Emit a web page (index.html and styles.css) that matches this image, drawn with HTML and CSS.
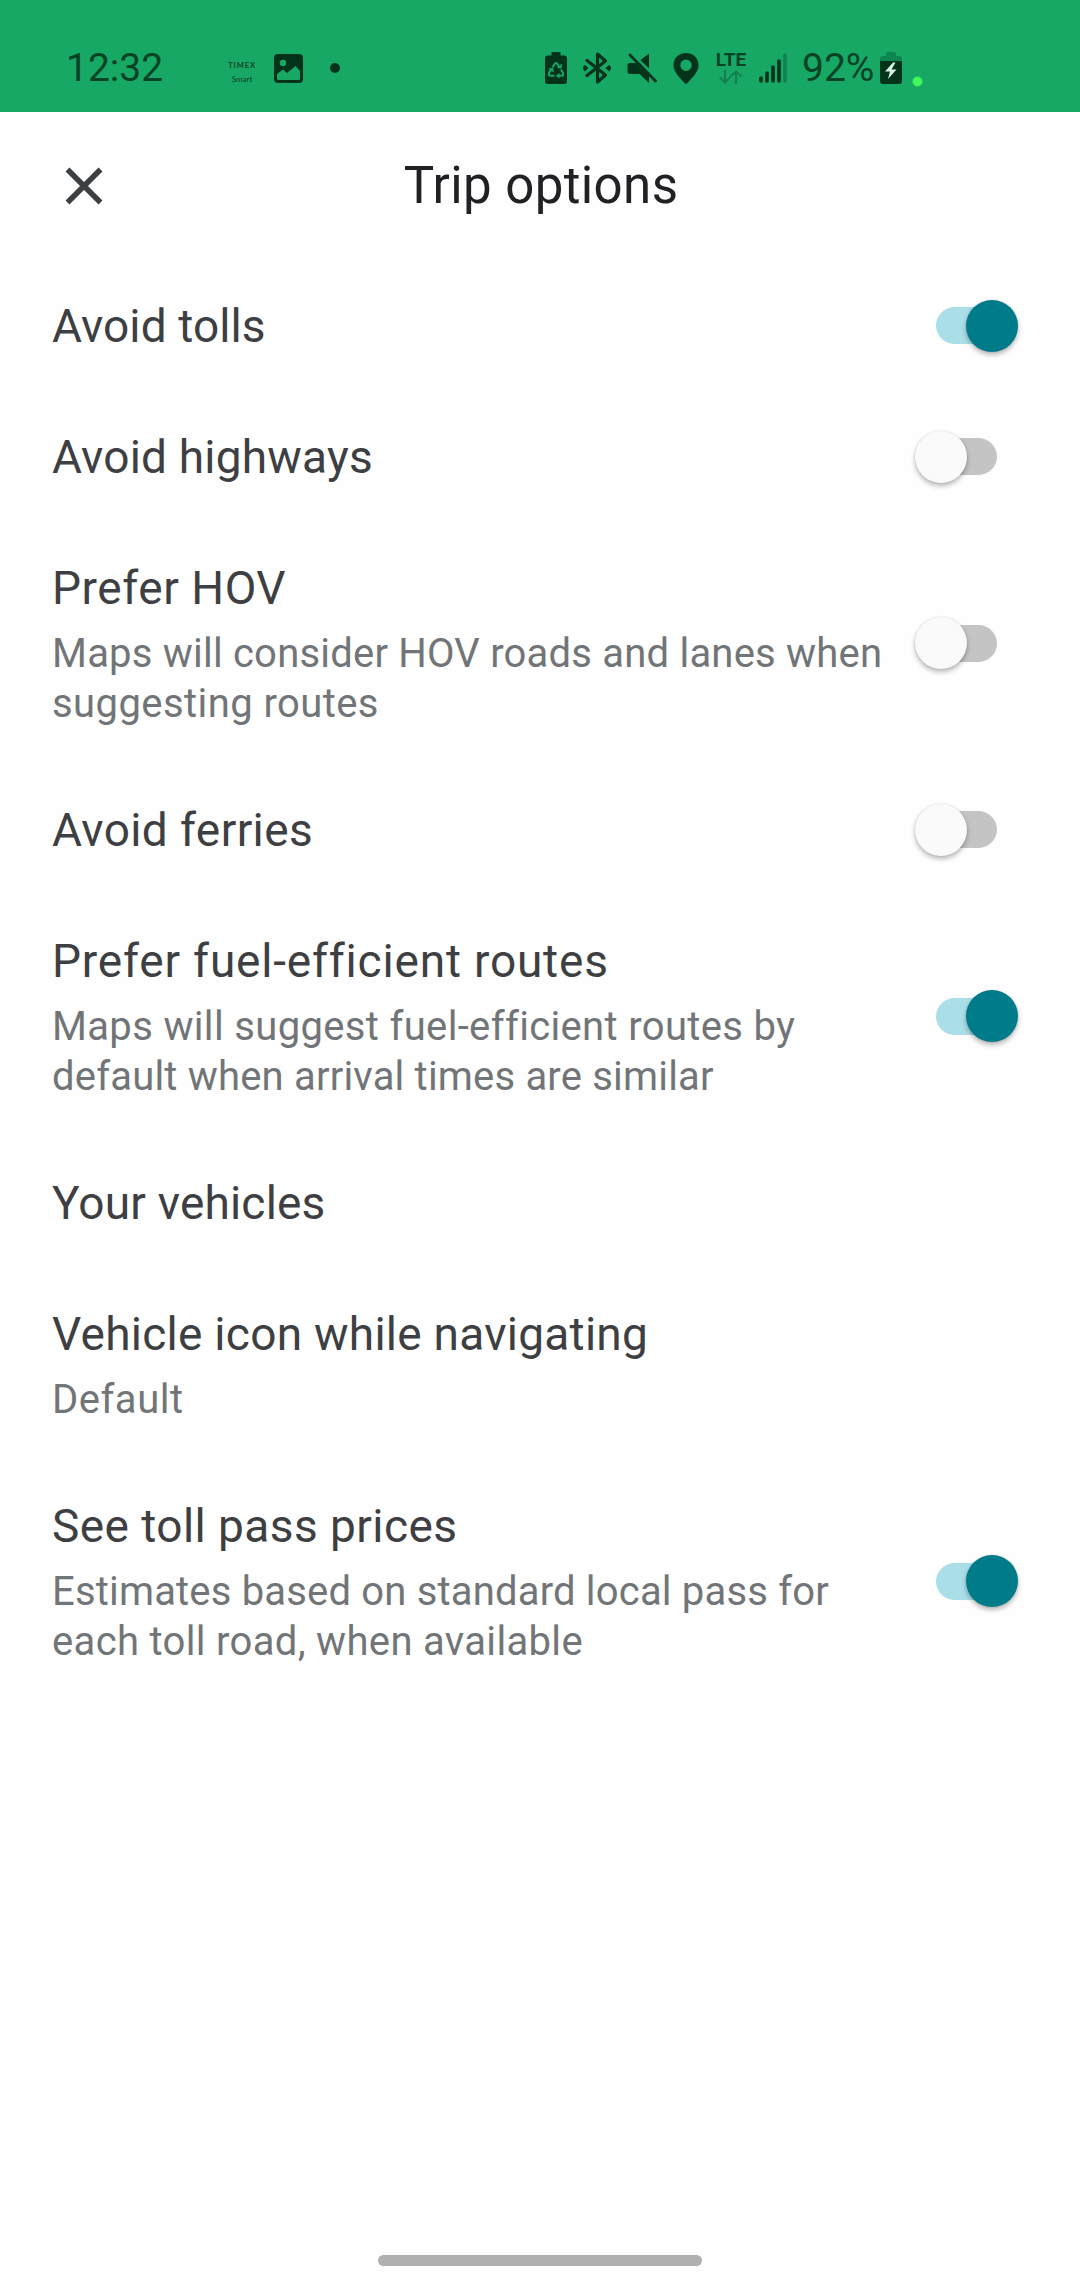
FILE: index.html
```html
<!DOCTYPE html>
<html lang="en">
<head>
<meta charset="utf-8">
<title>Trip options</title>
<link rel="stylesheet" href="styles.css">
</head>
<body>
<div class="screen">
  <div class="status">
    <span class="clock">12:32</span>
    <span class="timex"><span class="timex-name">TIMEX</span><span class="timex-sub">Smart</span></span>
    <svg class="picture" width="29" height="29" viewBox="0 0 29 29"><rect width="29" height="29" rx="4"/><circle class="bg" cx="9" cy="9" r="3.2"/><path class="bg" d="M3 20 9 15.5l4 3.500L21.500 12l4.500 5v7.500a1.500 1.500 0 0 1-1.500 1.500h-20A1.500 1.500 0 0 1 3 24.500z"/></svg>
    <span class="more"></span>
    <span class="spacer"></span>
    <svg class="saver" width="22" height="32" viewBox="0 0 22 32"><path d="M6.500 0h9v3.500H19a3 3 0 0 1 3 3V29a3 3 0 0 1-3 3H3a3 3 0 0 1-3-3V6.500a3 3 0 0 1 3-3h3.500z"/><g class="line" stroke-width="2"><path d="M7.500 15.500 10 11.500q1-1.200 2 0l2.300 3.500"/><path d="m16 17.500 2 3.500q.8 2.500-1.500 2.800h-4"/><path d="M9.500 23.800h-4Q3.200 23.500 4 21l2-3.500"/></g><path class="bg" d="m11.500 16 5 .5.5-5zM14.500 21v5.500L11 23.800zM3 16.500l5-.5 1.200 4.500z"/></svg>
    <svg class="bt" width="28" height="32" viewBox="0 0 28 32"><path class="ink" stroke-width="3.200" d="M4 8.500 22.500 23 14.500 30V2l8 7L4 23.500"/><path d="M0 16q0-2 2-3l3.500 3L2 19.500Q0 18 0 16zM28 16q0-2-2-3l-3.500 3 3.500 3.500q2-1.500 2-3.500z"/></svg>
    <svg class="mute" width="30" height="32" viewBox="0 0 30 32"><path d="M22 1.500V17L13 8.500zM3 11h6l13 13v7L12.500 22H3q-2.500 0-2.500-2.500v-6Q.5 11 3 11z"/><path class="cut" stroke-width="2" d="M5 1.500 30.500 26"/><path class="ink" stroke-width="2.800" d="M3 3 28.500 29"/></svg>
    <svg class="pin" width="26" height="31" viewBox="0 0 26 31"><path fill-rule="evenodd" d="M13 0C5.500 0 .5 5.500.5 12c0 7.500 7 13.500 11 18q1.500 1.500 3 0c4-4.500 11-10.500 11-18C25.500 5.500 20.500 0 13 0zm0 6.500a5.700 5.700 0 1 1 0 11.400 5.700 5.700 0 0 1 0-11.400z"/></svg>
    <span class="network"><span class="lte">LTE</span><svg width="24" height="14" viewBox="0 0 24 14"><path class="faint" stroke-width="2.200" d="M6 1v11.500M1.500 8 6 12.500 10.500 8M17 13V1.500M12 6l5-4.500L22 6"/></svg></span>
    <svg class="signal" width="29" height="30" viewBox="0 0 29 30"><path class="ink" stroke-width="3.600" d="M2 25v3M8 20v8M14 14v14M20 8v20"/><path class="faint" stroke-width="3.600" d="M26 2v26"/></svg>
    <span class="percent">92%</span>
    <svg class="battery" width="22" height="32" viewBox="0 0 22 32"><path class="cap" d="M6 2q0-2 2-2h6q2 0 2 2v2h3q3 0 3 3v2H0V7q0-3 3-3h3z"/><path d="M0 9h22v20q0 3-3 3H3q-3 0-3-3z"/><path class="bolt" d="M13 10.500 5 19.500h5L8 27l8.500-9.500h-5l4-7z"/></svg>
    <span class="active"></span>
  </div>

  <header class="header">
    <svg class="close" width="38" height="38" viewBox="0 0 38 38"><path d="M2.500 2.500 35.500 35.500M35.500 2.500 2.500 35.500"/></svg>
    <h1 class="heading">Trip options</h1>
  </header>

  <main class="options">
    <section class="row"><div class="text"><h2 class="name n1">Avoid tolls</h2></div><span class="switch on"><i class="thumb"></i></span></section>
    <section class="row"><div class="text"><h2 class="name n2">Avoid highways</h2></div><span class="switch"><i class="thumb"></i></span></section>
    <section class="row"><div class="text"><h2 class="name n3">Prefer HOV</h2><p class="note"><span class="l1">Maps will consider HOV roads and lanes when</span><span class="l2">suggesting routes</span></p></div><span class="switch"><i class="thumb"></i></span></section>
    <section class="row"><div class="text"><h2 class="name n4">Avoid ferries</h2></div><span class="switch"><i class="thumb"></i></span></section>
    <section class="row"><div class="text"><h2 class="name n5">Prefer fuel-efficient routes</h2><p class="note"><span class="l3">Maps will suggest fuel-efficient routes by</span><span class="l4">default when arrival times are similar</span></p></div><span class="switch on"><i class="thumb"></i></span></section>
    <section class="row"><div class="text"><h2 class="name n6">Your vehicles</h2></div></section>
    <section class="row"><div class="text"><h2 class="name n7">Vehicle icon while navigating</h2><p class="note"><span class="l5">Default</span></p></div></section>
    <section class="row"><div class="text"><h2 class="name n8">See toll pass prices</h2><p class="note"><span class="l6">Estimates based on standard local pass for</span><span class="l7">each toll road, when available</span></p></div><span class="switch on"><i class="thumb"></i></span></section>
  </main>

  <div class="gesture"></div>
</div>
</body>
</html>
```
FILE: styles.css
```css
* { box-sizing: border-box; }
body { margin: 0; background: #fefefe; font-family: Roboto, "Noto Sans", sans-serif; color: #3d3f42; }
.screen { display: flex; flex-direction: column; width: 1080px; height: 2280px; overflow: hidden; }
svg { display: block; flex: none; }

.status { display: flex; align-items: center; height: 112px; padding: 24px 157px 0 66px; background: #17a866; color: #064224; fill: #04331c; }
.status > * { flex: none; }
.bg { fill: #17a866; }
.line { fill: none; stroke: #17a866; }
.ink { fill: none; stroke: #04331c; stroke-linecap: round; stroke-linejoin: round; }
.cut { fill: none; stroke: #17a866; }
.faint { fill: none; stroke: #108250; stroke-linecap: round; stroke-linejoin: round; }
.cap { fill: #0e8450; }
.bolt { fill: #d9f4e5; }
.clock { width: 162px; font-size: 39px; line-height: 46px; }
.timex { display: flex; flex-direction: column; align-items: center; gap: 5px; width: 28px; margin-top: 8px; white-space: nowrap; }
.timex-name { font: bold 7.500px/8px Lato, sans-serif; letter-spacing: .9px; }
.timex-sub { font: 8px/8px Lato, sans-serif; }
.picture { margin-left: 18px; }
.more { width: 10px; height: 10px; margin-left: 27px; border-radius: 50%; background: #04331c; }
.spacer { width: 205px; }
.bt { margin-left: 16px; }
.mute { margin-left: 16px; }
.pin { margin-left: 16px; }
.network { display: flex; flex-direction: column; align-items: center; gap: 3px; width: 32px; margin-left: 16px; }
.lte { font-size: 19px; font-weight: 700; line-height: 15px; }
.signal { margin-left: 12px; }
.percent { width: 78px; margin-left: 14px; font-size: 39px; line-height: 46px; }
.active { width: 11px; height: 11px; margin: 27px 0 0 10px; border-radius: 50%; background: #42f85c; border: 1px solid #21c957; }

.header { display: grid; grid-template-columns: 1fr auto 1fr; align-items: center; height: 148px; padding: 0 65px; }
.close { fill: none; stroke: #3c4043; stroke-width: 5.500; }
.heading { margin: 0; padding-left: 2px; font-size: 51px; line-height: 60px; font-weight: 400; letter-spacing: .4px; color: #202124; }

.options { flex: 1; }
.row { display: flex; align-items: center; justify-content: space-between; padding-right: 62px; }
.text { padding: 38px 0 37px 52px; white-space: nowrap; }
.text:has(.note) { padding-bottom: 35px; }
.name { margin: 0; font-size: 46px; line-height: 56px; font-weight: 400; }
.note { margin: 13px 0 0; font-size: 40px; line-height: 50px; color: #727578; }
.note span { display: block; }
.n1 { letter-spacing: .1px; }
.n2 { letter-spacing: .2px; }
.n3 { letter-spacing: .55px; }
.n4 { letter-spacing: .4px; }
.n5 { letter-spacing: .81px; }
.n6 { letter-spacing: .19px; }
.n7 { letter-spacing: .26px; }
.n8 { letter-spacing: .44px; }
.l1 { letter-spacing: .21px; }
.l2 { letter-spacing: .42px; }
.l3 { letter-spacing: .34px; }
.l4 { letter-spacing: .19px; }
.l5 { letter-spacing: .5px; }
.l6 { letter-spacing: .18px; }
.l7 { letter-spacing: .33px; }
.switch { display: flex; align-items: center; width: 61px; height: 37px; margin-right: 21px; border-radius: 19px; background: #c4c4c4; }
.thumb { flex: none; width: 52px; height: 52px; margin-left: -21px; border-radius: 50%; background: #fafafa; box-shadow: 0 3px 5px rgba(0,0,0,.28), 0 0 2px rgba(0,0,0,.12); }
.on { background: #aadee9; }
.on .thumb { margin-left: 30px; background: #007b8a; }

.gesture { width: 324px; height: 11px; margin: 0 auto 14px; border-radius: 6px; background: #b0b0b0; }
```
